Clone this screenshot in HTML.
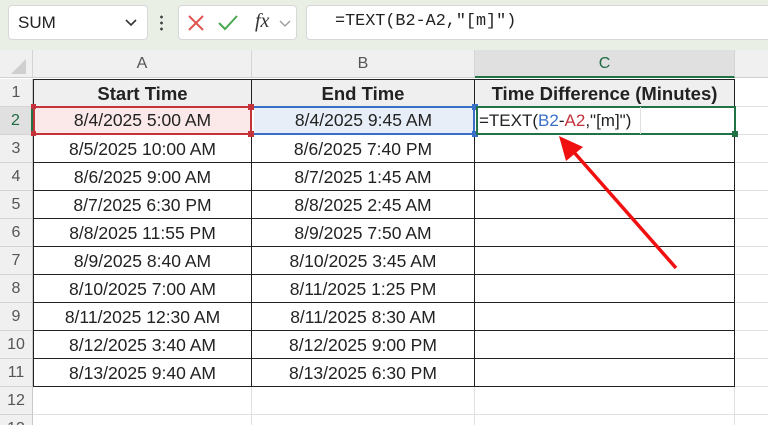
<!DOCTYPE html>
<html><head><meta charset="utf-8"><style>
*{box-sizing:border-box;margin:0;padding:0}
html,body{width:768px;height:425px;overflow:hidden}
body{background:#fff;font-family:"Liberation Sans",sans-serif;position:relative}
.abs{position:absolute}
.tb{left:0;top:0;width:768px;height:50px;background:#e9efe5}
.box{background:#fff;border:1px solid #d8d8d8;border-radius:4px;top:5px;height:35px}
.ch{top:50px;height:28px;background:#f0f0f0;border-bottom:1px solid #d0d0d0;color:#555;font-size:16px;text-align:center;line-height:28px;border-right:1px solid #d4d4d4}
.rh{left:0;width:33px;background:#f0f0f0;color:#555;font-size:16px;text-align:center;line-height:28px;border-bottom:1px solid #d4d4d4;border-right:1px solid #c8c8c8}
.c{height:28px;font-size:17.5px;text-align:center;line-height:28px;color:#222;border-right:1.5px solid #222;border-bottom:1.5px solid #222;white-space:nowrap}
.g{height:28px;border-right:1px solid #e0e0e0;border-bottom:1px solid #e0e0e0}
</style></head><body>
<div class="abs tb"></div>
<div class="abs box" style="left:8px;width:140px"><span class="abs" style="left:9px;top:7px;font-size:17px;color:#222">SUM</span><svg class="abs" style="left:115px;top:12px" width="14" height="10"><path d="M2 2l5 5 5-5" stroke="#333" stroke-width="1.6" fill="none"/></svg></div>
<div class="abs" style="left:160px;top:14px;width:3px;height:17px;background:radial-gradient(circle,#444 1.3px,transparent 1.5px) 0 0/3px 6px"></div>
<div class="abs box" style="left:178px;width:119px">
<svg class="abs" style="left:8px;top:8px" width="18" height="18"><path d="M2 2L16 16M16 2L2 16" stroke="#e0554f" stroke-width="2"/></svg>
<svg class="abs" style="left:38px;top:8px" width="22" height="18"><path d="M2 9l6 6L20 2" stroke="#4aa84e" stroke-width="2" fill="none"/></svg>
<span class="abs" style="left:76px;top:4px;font-family:'Liberation Serif',serif;font-style:italic;font-size:20px;color:#333">fx</span>
<svg class="abs" style="left:100px;top:14px" width="12" height="8"><path d="M1 1l5 5 5-5" stroke="#999" stroke-width="1.3" fill="none"/></svg></div>
<div class="abs box" style="left:306px;width:470px"><span class="abs" style="left:28px;top:6px;font-family:'Liberation Mono',monospace;font-size:16.8px;color:#222">=TEXT(B2-A2,"[m]")</span></div>

<div class="abs ch" style="left:0;width:33px"><svg width="33" height="28"><path d="M26 9L26 24L11 24Z" fill="#cfcfcf"/></svg></div>
<div class="abs ch" style="left:33px;width:219px">A</div>
<div class="abs ch" style="left:252px;width:223px">B</div>
<div class="abs ch" style="left:475px;width:260px;background:#e0e0e0;color:#1e6b43;border-bottom:2px solid #217346">C</div>
<div class="abs ch" style="left:735px;width:40px"></div>

<div id="grid"></div>
<script>
var A=["Start Time","8/4/2025 5:00 AM","8/5/2025 10:00 AM","8/6/2025 9:00 AM","8/7/2025 6:30 PM","8/8/2025 11:55 PM","8/9/2025 8:40 AM","8/10/2025 7:00 AM","8/11/2025 12:30 AM","8/12/2025 3:40 AM","8/13/2025 9:40 AM"];
var B=["End Time","8/4/2025 9:45 AM","8/6/2025 7:40 PM","8/7/2025 1:45 AM","8/8/2025 2:45 AM","8/9/2025 7:50 AM","8/10/2025 3:45 AM","8/11/2025 1:25 PM","8/11/2025 8:30 AM","8/12/2025 9:00 PM","8/13/2025 6:30 PM"];
var h="";
for(var i=0;i<13;i++){var y=79+i*28;
h+='<div class="abs rh" style="top:'+y+'px;height:28px;'+(i==1?'color:#1e6b43;background:#e0e0e0;border-right:2px solid #217346':'')+'">'+(i+1)+'</div>';
if(i<11){var b=i==0?'font-weight:bold;font-size:18.5px;background:#efefef;':'';
h+='<div class="abs c" style="left:33px;top:'+y+'px;width:219px;border-left:1.5px solid #222;'+(i==0?'border-top:1.5px solid #222;':'')+b+'">'+A[i]+'</div>';
h+='<div class="abs c" style="left:252px;top:'+y+'px;width:223px;'+(i==0?'border-top:1.5px solid #222;':'')+b+'">'+B[i]+'</div>';
h+='<div class="abs c" style="left:475px;top:'+y+'px;width:260px;'+(i==0?'border-top:1.5px solid #222;':'')+b+'">'+(i==0?'Time Difference (Minutes)':'')+'</div>';
h+='<div class="abs g" style="left:735px;top:'+y+'px;width:40px"></div>';}
else{h+='<div class="abs g" style="left:33px;top:'+y+'px;width:219px"></div><div class="abs g" style="left:252px;top:'+y+'px;width:223px"></div><div class="abs g" style="left:475px;top:'+y+'px;width:260px"></div><div class="abs g" style="left:735px;top:'+y+'px;width:40px"></div>';}}
document.getElementById("grid").innerHTML=h;
</script>
<div class="abs" style="left:33px;top:106px;width:219px;height:29px;background:#fbe9e9;border:2px solid #c4323a;text-align:center;line-height:25px;font-size:17.5px;color:#222">8/4/2025 5:00 AM</div>
<div class="abs" style="left:31px;top:104px;width:5px;height:5px;background:#c4323a"></div>
<div class="abs" style="left:248px;top:104px;width:6px;height:6px;background:#c4323a"></div>
<div class="abs" style="left:31px;top:131px;width:5px;height:5px;background:#c4323a"></div>
<div class="abs" style="left:248px;top:131px;width:6px;height:6px;background:#c4323a"></div>
<div class="abs" style="left:254px;top:106px;width:221px;height:29px;background:#e8eef8;border:2px solid #3a6fc8;border-left:none;text-align:center;line-height:25px;font-size:17.5px;color:#222">8/4/2025 9:45 AM</div>
<div class="abs" style="left:472px;top:104px;width:6px;height:6px;background:#3a6fc8"></div>
<div class="abs" style="left:472px;top:131px;width:6px;height:6px;background:#3a6fc8"></div>
<div class="abs" style="left:476px;top:106px;width:260px;height:29px;background:#fff;border:2px solid #217346;font-size:17px;line-height:25px;padding-left:1px;color:#222;white-space:nowrap">=TEXT(<span style="color:#3a6fc8">B2</span>-<span style="color:#c4323a">A2</span>,"[m]")</div>
<div class="abs" style="left:732px;top:131px;width:6px;height:6px;background:#217346"></div>
<div class="abs" style="left:640px;top:107px;width:1px;height:27px;background:#e0e0e0"></div>
<svg class="abs" style="left:0;top:0" width="768" height="425">
<line x1="676" y1="268" x2="572" y2="150" stroke="#f01010" stroke-width="3.5"/>
<path d="M559 136L583 147L566 161Z" fill="#f01010"/>
</svg>
</body></html>
